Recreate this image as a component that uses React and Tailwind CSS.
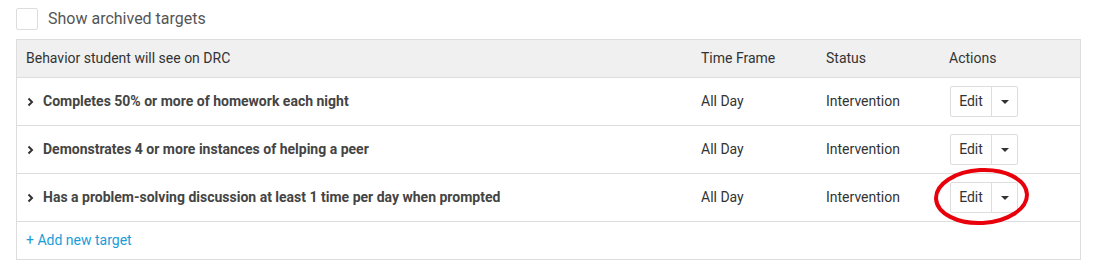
import React from 'react'

const rows = [
  'Completes 50% or more of homework each night',
  'Demonstrates 4 or more instances of helping a peer',
  'Has a problem-solving discussion at least 1 time per day when prompted',
]

function EditButton({ circled }) {
  return (
    <div className="relative inline-flex">
      <div className="flex h-[31px] border border-[#ddd] rounded-[2px] bg-white">
        <span className="w-[40px] flex items-center justify-center text-[14px] text-[#333]">Edit</span>
        <span className="w-[26px] border-l border-[#ddd] flex items-center justify-center">
          <span className="w-0 h-0 border-l-[4px] border-r-[4px] border-t-[4px] border-l-transparent border-r-transparent border-t-[#333]" />
        </span>
      </div>
      {circled && (
        <svg className="absolute left-[-18px] top-[-16px] pointer-events-none" width="100" height="62" viewBox="0 0 100 62">
          <ellipse cx="49.5" cy="30.5" rx="45.5" ry="26.5" fill="none" stroke="#e8000b" strokeWidth="4" transform="rotate(-3 49.5 30.5)" />
        </svg>
      )}
    </div>
  )
}

export default function App() {
  return (
    <div className="w-[1097px] h-[280px] bg-white font-['Roboto',sans-serif] text-[#333]">
      <div className="pt-[8px] px-4">
        <label className="flex items-center h-[22px] gap-[10px]">
          <span className="w-[22px] h-[22px] border border-[#ddd] rounded-[2px] bg-white" />
          <span className="text-[16px] text-[#555]">Show archived targets</span>
        </label>
        <div className="mt-[9px] border border-[#ddd]">
          <div className="grid grid-cols-[674px_125px_123px_1fr] h-[38px] bg-[#f0f0f0] border-b border-[#ddd] items-center text-[14px]">
            <div className="pl-[9px]">Behavior student will see on DRC</div>
            <div className="pl-[10px]">Time Frame</div>
            <div className="pl-[10px]">Status</div>
            <div className="pl-[10px]">Actions</div>
          </div>
          {rows.map((r, i) => (
            <div key={i} className="grid grid-cols-[674px_125px_123px_1fr] h-[48px] border-b border-[#ddd] items-center text-[14px]">
              <div className="pl-[9px] flex items-center font-bold text-[#444]">
                <svg width="8" height="10" viewBox="0 0 8 10" className="ml-[1px] mr-[8px]">
                  <path d="M1.5 1.5 L5 5 L1.5 8.5" fill="none" stroke="#333" strokeWidth="2" />
                </svg>
                {r}
              </div>
              <div className="pl-[10px]">All Day</div>
              <div className="pl-[10px]">Intervention</div>
              <div className="pl-[11px]">
                <EditButton circled={i === 2} />
              </div>
            </div>
          ))}
          <div className="h-[37px] flex items-center pl-[9px] text-[14px] text-[#1a9dd9]">+ Add new target</div>
        </div>
      </div>
    </div>
  )
}
